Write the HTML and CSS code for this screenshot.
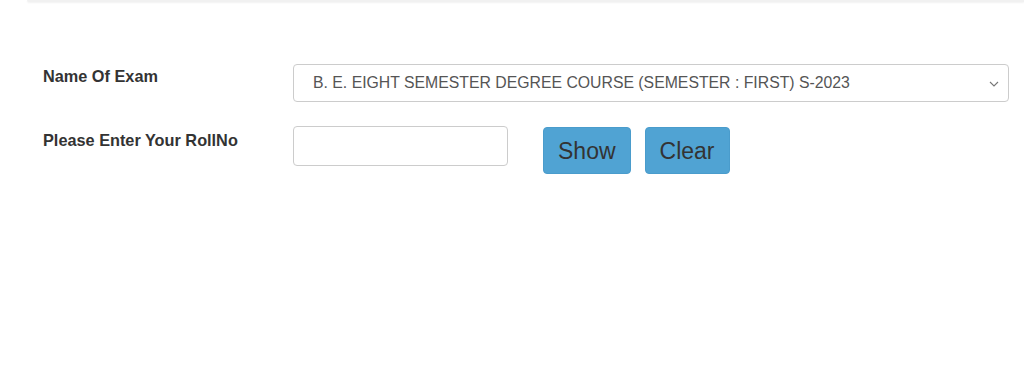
FILE: index.html
```html
<!DOCTYPE html>
<html lang="en">
 <head>
   <title>Result</title>
   <meta charset="utf-8">
   <link rel="stylesheet" href="styles.css">
 </head>
 <body>
  <div id="topbar"></div>

  <div id="form">
    <div class="row">
      <label class="caption">Name Of Exam</label>
      <div class="field">
        <div class="select">
          <span>B. E. EIGHT SEMESTER DEGREE COURSE (SEMESTER : FIRST) S-2023</span>
          <svg class="chevron" width="10" height="6" viewBox="0 0 10 6"><path d="M1 1 L5 5 L9 1" fill="none" stroke="#777" stroke-width="1.1"/></svg>
        </div>
      </div>
    </div>

    <div class="row">
      <label class="caption">Please Enter Your RollNo</label>
      <div class="field inline">
        <input type="text" id="rollno">
        <button class="blue">Show</button>
        <button class="blue">Clear</button>
      </div>
    </div>
  </div>
 </body>
</html>
```

FILE: styles.css
```css
html, body {
  margin: 0;
  padding: 0;
  background: #fff;
  font-family: "Liberation Sans", Arial, sans-serif;
  color: #333;
}

#topbar {
  height: 2px;
  margin-left: 27px;
  background-color: #f1f1f1;
  border-bottom-left-radius: 3px;
  box-shadow: 0 1px 2px rgba(0, 0, 0, 0.06);
}

#form {
  padding: 62px 15px 0 43px;
}

.row {
  display: grid;
  grid-template-columns: 250px 1fr;
  margin-bottom: 26px;
}

.caption {
  font-weight: bold;
  font-size: 16.3px;
  padding-top: 3px;
}

.select {
  display: flex;
  align-items: center;
  justify-content: space-between;
  height: 38px;
  box-sizing: border-box;
  border: 1px solid #ccc;
  border-radius: 4px;
  padding: 0 9px 0 19px;
  font-size: 15.8px;
  color: #555;
}

.chevron {
  margin-top: 1px;
}

.inline {
  display: flex;
  align-items: flex-start;
  margin-top: -2px;
}

#rollno {
  width: 215px;
  height: 40px;
  box-sizing: border-box;
  border: 1px solid #ccc;
  border-radius: 4px;
  margin: 0 35px 0 0;
  font-size: 16px;
}

button {
  font-family: "Liberation Sans", Arial, sans-serif;
  font-size: 23px;
  color: #333;
  height: 47px;
  padding: 2px 14px 0;
  border: 1px solid #4a9ccc;
  border-radius: 4px;
  margin: 1px 14px 0 0;
}

.blue {
  background-color: #50a3d3;
}
```
